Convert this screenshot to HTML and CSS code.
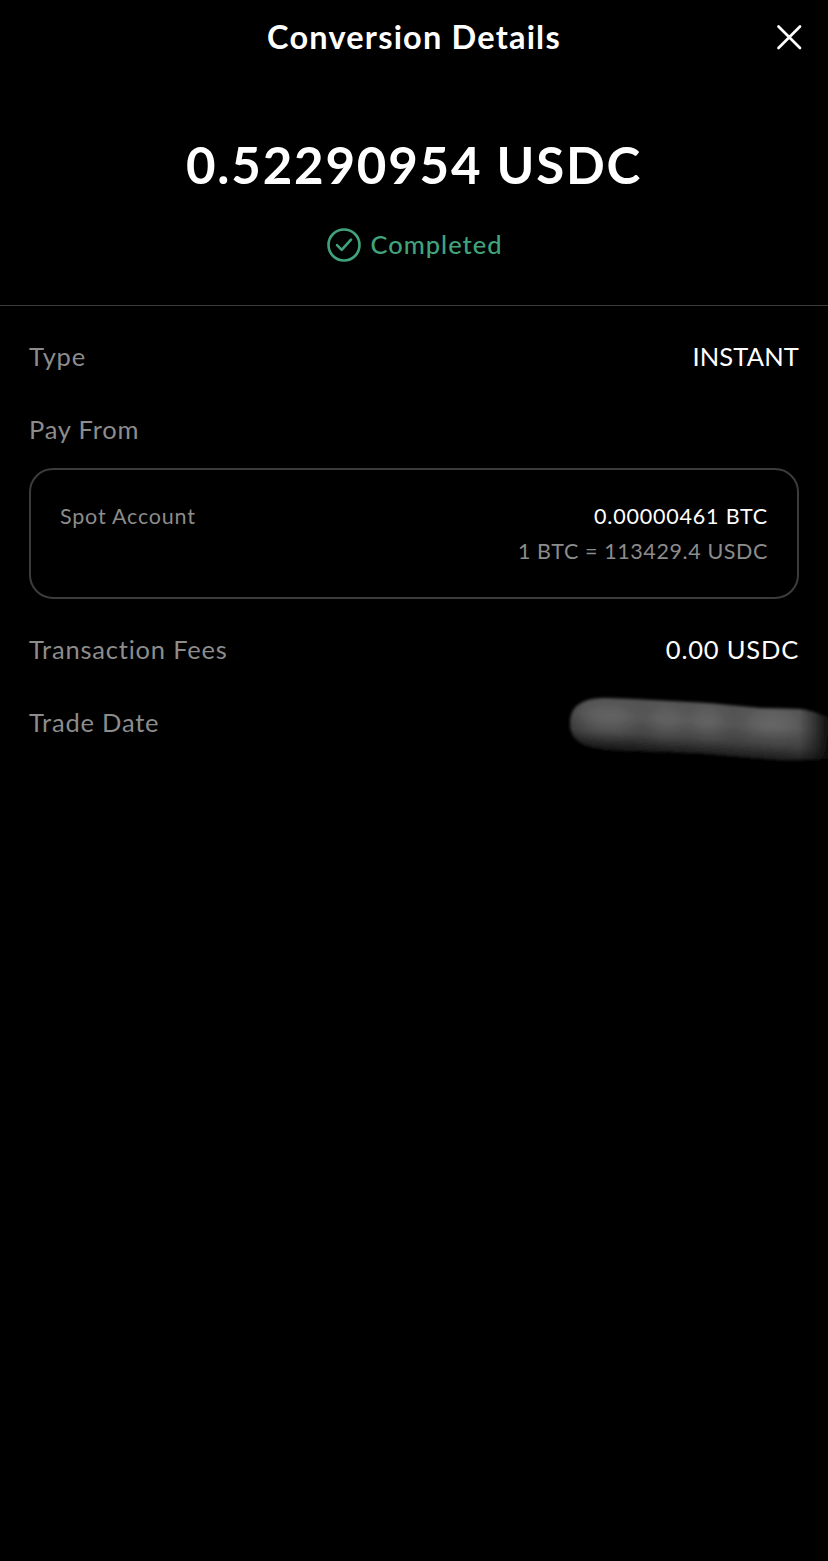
FILE: index.html
```html
<!DOCTYPE html>
<html lang="en">

<head>
    <meta charset="UTF-8">
    <meta name="viewport" content="width=device-width, initial-scale=1.0">
    <title>Conversion Details</title>
    <link rel="stylesheet" href="styles.css">
</head>

<body>
    <header class="header">
        <h1 class="title">Conversion Details</h1>
        <button class="close-button" aria-label="Close">
            <svg width="26" height="26" viewBox="0 0 26 26">
                <path d="M2.5 2.5L24 24M24 2.5L2.5 24" />
            </svg>
        </button>
    </header>

    <section class="summary">
        <div class="amount">0.52290954 USDC</div>
        <div class="status">
            <svg class="status-icon" width="34" height="34" viewBox="0 0 34 34">
                <circle cx="17" cy="17" r="15.5" />
                <path d="M10 17.2L14.7 21.9L24 11.7" />
            </svg>
            <span class="status-text">Completed</span>
        </div>
    </section>

    <main class="details">
        <div class="row">
            <span class="label">Type</span>
            <span class="value">INSTANT</span>
        </div>
        <div class="row">
            <span class="label">Pay From</span>
        </div>

        <div class="account-card">
            <span class="account-name">Spot Account</span>
            <div class="account-values">
                <span class="account-amount">0.00000461 BTC</span>
                <span class="account-rate">1 BTC = 113429.4 USDC</span>
            </div>
        </div>

        <div class="row">
            <span class="label">Transaction Fees</span>
            <span class="value fee-value">0.00 USDC</span>
        </div>
        <div class="row">
            <span class="label">Trade Date</span>
            <svg class="hidden-date" width="268" height="80" viewBox="560 690 268 80">
                <defs>
                    <filter id="soft" x="-10%" y="-30%" width="120%" height="160%">
                        <feGaussianBlur stdDeviation="1.5" />
                    </filter>
                    <filter id="glow" x="-50%" y="-50%" width="200%" height="200%">
                        <feGaussianBlur stdDeviation="10" />
                    </filter>
                    <linearGradient id="fade" x1="0" y1="0" x2="1" y2="0">
                        <stop offset="0" stop-color="#424242" />
                        <stop offset="0.1" stop-color="#525252" />
                        <stop offset="0.86" stop-color="#525252" />
                        <stop offset="0.92" stop-color="#303030" />
                        <stop offset="0.97" stop-color="#0c0c0c" />
                    </linearGradient>
                    <linearGradient id="shade" gradientUnits="userSpaceOnUse" x1="700" y1="722" x2="697" y2="760">
                        <stop offset="0" stop-color="#000" stop-opacity="0" />
                        <stop offset="0.45" stop-color="#000" stop-opacity="0.22" />
                        <stop offset="1" stop-color="#000" stop-opacity="0.85" />
                    </linearGradient>
                    <clipPath id="strip">
                        <path d="M570 723C570 706 582 698 606 698L634 699L708 703L760 708L800 709C814 711 822 715 835 720V758C812 760 792 761 770 759L700 753L610 750C585 747 570 742 570 723Z" />
                    </clipPath>
                </defs>
                <g filter="url(#soft)">
                    <g clip-path="url(#strip)">
                        <rect x="560" y="690" width="278" height="80" fill="url(#fade)" />
                        <g filter="url(#glow)" fill="#6c6c6c">
                            <ellipse cx="608" cy="724" rx="26" ry="14" />
                            <ellipse cx="666" cy="724" rx="15" ry="14" />
                            <ellipse cx="707" cy="724" rx="14" ry="14" />
                            <ellipse cx="772" cy="724" rx="26" ry="12" />
                        </g>
                        <rect x="560" y="690" width="278" height="80" fill="url(#shade)" />
                    </g>
                </g>
            </svg>
        </div>
    </main>
</body>

</html>
```

FILE: styles.css
```css
:root {
    --background-color: #000000;
    --text-color: #ffffff;
    --muted-color: #8c8c8c;
    --border-color: #3c3c3c;
    --success-color: #41a37c;
}

* {
    margin: 0;
    padding: 0;
    box-sizing: border-box;
}

body {
    font-family: Lato, "Open Sans", sans-serif;
    background-color: var(--background-color);
    color: var(--text-color);
    min-height: 100vh;
    overflow-x: hidden;
}

.header {
    display: grid;
    grid-template-columns: 1fr auto 1fr;
    align-items: center;
    height: 74px;
    padding: 0 26px;
}

.title {
    grid-column: 2;
    font-size: 32.5px;
    font-weight: 700;
    line-height: 40px;
    letter-spacing: 1.2px;
}

.close-button {
    justify-self: end;
    height: 26px;
    border: none;
    background: none;
    cursor: pointer;
}

.close-button svg {
    display: block;
    fill: none;
    stroke: var(--text-color);
    stroke-width: 2.7;
    stroke-linecap: round;
}

.summary {
    display: flex;
    flex-direction: column;
    align-items: center;
    gap: 30px;
    height: 232px;
    padding-top: 61px;
    border-bottom: 1px solid var(--border-color);
}

.amount {
    font-size: 51px;
    font-weight: 700;
    line-height: 60px;
    letter-spacing: 1.8px;
}

.status {
    display: flex;
    align-items: center;
    gap: 9px;
    height: 40px;
    font-size: 25.5px;
    color: var(--success-color);
}

.status-icon {
    fill: none;
    stroke: var(--success-color);
    stroke-width: 2.6;
    stroke-linecap: round;
    stroke-linejoin: round;
}

.status-text {
    font-weight: 500;
    letter-spacing: 1px;
    margin-right: -2px;
    padding-bottom: 2px;
}

.details {
    padding: 35px 29px;
}

.row {
    display: flex;
    justify-content: space-between;
    align-items: center;
    height: 32px;
    margin-bottom: 41px;
    font-size: 25.5px;
    line-height: 30px;
}

.label,
.value {
    padding-bottom: 2px;
}

.label {
    color: var(--muted-color);
    letter-spacing: 0.8px;
}

.value {
    letter-spacing: 0.15px;
}

.fee-value {
    letter-spacing: 0.8px;
}

.account-card {
    display: flex;
    justify-content: space-between;
    height: 131px;
    margin: -19px 0 35px;
    padding: 29px 29px;
    border: 2px solid var(--border-color);
    border-radius: 24px;
    font-size: 21.5px;
    line-height: 35px;
    letter-spacing: 0.8px;
    color: var(--muted-color);
}

.account-values {
    display: flex;
    flex-direction: column;
    align-items: flex-end;
}

.account-amount {
    color: var(--text-color);
}

.account-rate {
    letter-spacing: 0.6px;
}

.hidden-date {
    flex: none;
    margin: 0 -29px 0 0;
    position: relative;
    top: 7px;
}
```
